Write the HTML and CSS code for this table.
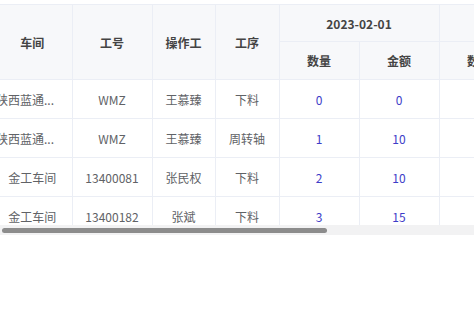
FILE: index.html
```html
<!DOCTYPE html>
<html lang="zh">
<head>
<meta charset="utf-8">
<link rel="stylesheet" href="styles.css">
</head>
<body>
<div class="page">
  <div class="clip">
    <table class="grid">
      <colgroup>
        <col class="c1"><col class="c2"><col class="c3"><col class="c4">
        <col class="cn"><col class="cn"><col class="cn"><col class="cn">
      </colgroup>
      <thead>
        <tr class="h1">
          <th rowspan="2" class="first">车间</th>
          <th rowspan="2">工号</th>
          <th rowspan="2">操作工</th>
          <th rowspan="2">工序</th>
          <th colspan="2">2023-02-01</th>
          <th colspan="2">2023-02-02</th>
        </tr>
        <tr class="h2">
          <th>数量</th><th>金额</th><th>数量</th><th>金额</th>
        </tr>
      </thead>
      <tbody>
        <tr>
          <td class="first"><span class="trunc">陕西蓝通...</span></td>
          <td>WMZ</td><td>王慕臻</td><td>下料</td>
          <td class="num">0</td><td class="num">0</td><td class="num"></td><td class="num"></td>
        </tr>
        <tr>
          <td class="first"><span class="trunc">陕西蓝通...</span></td>
          <td>WMZ</td><td>王慕臻</td><td>周转轴</td>
          <td class="num">1</td><td class="num">10</td><td class="num"></td><td class="num"></td>
        </tr>
        <tr>
          <td class="first">金工车间</td>
          <td>13400081</td><td>张民权</td><td>下料</td>
          <td class="num">2</td><td class="num">10</td><td class="num"></td><td class="num"></td>
        </tr>
        <tr>
          <td class="first">金工车间</td>
          <td>13400182</td><td>张斌</td><td>下料</td>
          <td class="num">3</td><td class="num">15</td><td class="num"></td><td class="num"></td>
        </tr>
      </tbody>
    </table>
  </div>
  <div class="track"><div class="thumb"></div></div>
</div>
</body>
</html>
```
FILE: styles.css
```css
html, body {
  margin: 0;
  padding: 0;
  background: #ffffff;
}
.page {
  padding-top: 4px;
  width: 474px;
  font-family: "Noto Sans CJK SC", "Noto Sans", sans-serif;
  font-size: 12px;
}
.clip {
  height: 221px;
  overflow: hidden;
}
.grid {
  border-collapse: collapse;
  table-layout: fixed;
  width: 599px;
}
.c1 { width: 72px; }
.c2 { width: 80px; }
.c3 { width: 63px; }
.c4 { width: 64px; }
.cn { width: 80px; }
.grid th, .grid td {
  border: 1px solid #ebeef5;
  padding: 0;
  text-align: center;
  white-space: nowrap;
  overflow: hidden;
}
.grid th {
  background: #f7f8fa;
  color: #444444;
  font-weight: 700;
}
.grid tr.h1 th { height: 36px; }
.grid tr.h2 th { height: 37px; }
.grid td {
  height: 38px;
  color: #606266;
}
.grid th:first-child, .grid td:first-child { border-left: none; }
.grid .first { padding-right: 7px; }
.trunc {
  display: block;
  margin-left: -4px;
  text-align: left;
}
.grid td.num { color: #3d3dc8; }
.track {
  height: 10px;
  background: #f2f2f3;
  display: flex;
  align-items: center;
  padding-left: 2px;
}
.thumb {
  width: 325px;
  height: 5px;
  border-radius: 3px;
  background: #8c8c8c;
}
```
